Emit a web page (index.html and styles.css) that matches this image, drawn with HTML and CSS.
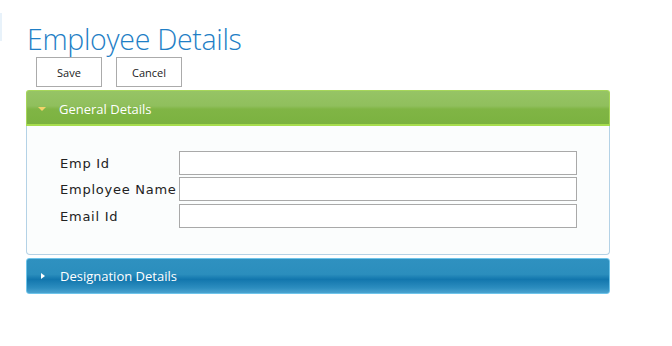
FILE: index.html
```html
<!DOCTYPE html>
<html>
<head>
<meta charset="utf-8">
<link rel="stylesheet" href="styles.css">
</head>
<body>
<div class="page">
  <div class="edge"></div>
  <div class="main">
    <h1 class="title">Employee Details</h1>
    <div class="toolbar">
      <button class="btn">Save</button>
      <button class="btn">Cancel</button>
    </div>
    <div class="acc">
      <div class="acc-head green">
        <span class="tri-down"></span>
        <span class="acc-title">General Details</span>
      </div>
      <div class="acc-body">
        <div class="form">
          <label class="lbl">Emp Id</label><input class="inp" type="text">
          <label class="lbl">Employee Name</label><input class="inp" type="text">
          <label class="lbl">Email Id</label><input class="inp" type="text">
        </div>
      </div>
    </div>
    <div class="acc acc2">
      <div class="acc-head blue">
        <span class="tri-right"></span>
        <span class="acc-title">Designation Details</span>
      </div>
    </div>
  </div>
</div>
</body>
</html>
```
FILE: styles.css
```css
* { box-sizing: border-box; }
html, body { margin: 0; padding: 0; background: #fff; }
.page { display: flex; align-items: flex-start; }
.edge { width: 2px; height: 28px; margin-top: 13px; background: #e8f2fa; }
.main { margin-left: 24px; width: 584px; }
.title {
  margin: 20px 0 0 1px;
  font-family: "Open Sans", sans-serif;
  font-weight: 300;
  font-size: 28.5px;
  line-height: 36px;
  color: #1f7fc6;
  letter-spacing: -0.3px;
  position: relative; top: 1px;
}
.toolbar { display: flex; gap: 14px; margin: 1px 0 0 10px; }
.btn {
  width: 66px; height: 30px;
  background: #fff;
  border: 1px solid #ababab;
  font-family: "Open Sans", sans-serif;
  font-size: 11px;
  color: #222;
  padding: 0;
}
.acc { margin-top: 3px; }
.acc-head {
  height: 36px;
  display: flex; align-items: center;
  border-radius: 3px 3px 0 0;
  padding-left: 11px;
  padding-top: 2px;
}
.green {
  background: linear-gradient(to bottom, #96c465 0%, #90bf5d 45%, #80b545 55%, #7bb240 100%);
  border: 1px solid #a6d65a;
  border-bottom: 2px solid #a7dd4e;
}
.blue {
  background: linear-gradient(to bottom, #2f91c0 0%, #2b8ebd 45%, #1276ad 60%, #2c8dbf 85%, #4aa2cf 100%);
  border: 1px solid #6ec4ea;
  border-radius: 3px;
  padding-top: 0;
}
.acc-title {
  font-family: "Open Sans", sans-serif;
  font-size: 13px;
  color: #fff;
  margin-left: 13px;
}
.tri-down {
  width: 0; height: 0;
  border-left: 4px solid transparent;
  border-right: 4px solid transparent;
  border-top: 4px solid #f3d36a;
}
.tri-right {
  width: 0; height: 0;
  border-top: 3.5px solid transparent;
  border-bottom: 3.5px solid transparent;
  border-left: 4px solid #fff;
  margin-left: 3px;
  margin-right: 2px;
}
.acc-body {
  height: 129px;
  background: #fbfdfd;
  border: 1px solid #b4d2e6;
  border-top: none;
  border-radius: 0 0 4px 4px;
  padding: 25px 0 0 33px;
}
.form {
  display: grid;
  grid-template-columns: 119px 398px;
  row-gap: 2px;
  align-items: center;
}
.form .lbl:nth-of-type(3), .form .inp:nth-of-type(3) { margin-top: 1px; }
.lbl {
  font-family: "DejaVu Sans", Verdana, sans-serif;
  font-size: 13px;
  letter-spacing: 0.75px;
  color: #222;
}
.inp {
  height: 24px;
  border: 1px solid #a9a9a9;
  background: #fff;
  margin: 0;
}
.acc2 { margin-top: 3px; }
```
